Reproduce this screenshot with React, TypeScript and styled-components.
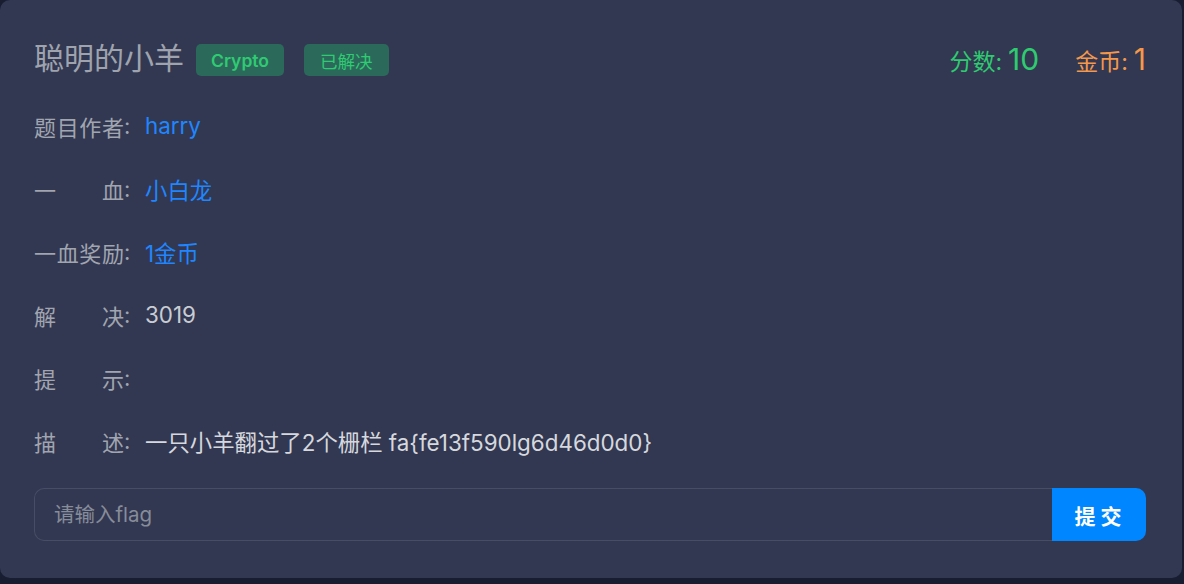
import React from "react";
import styled, { createGlobalStyle } from "styled-components";

const Global = createGlobalStyle`
  html, body { margin: 0; padding: 0; background: #181d31; }
  body { font-family: Inter, "Noto Sans CJK SC", sans-serif; }
`;

const Page = styled.div`
  width: 1184px;
  height: 584px;
  background: #181d31;
  overflow: hidden;
`;

const Card = styled.div`
  width: 1182px;
  height: 578px;
  box-sizing: border-box;
  background: #323852;
  border-radius: 10px;
  padding: 40px 36px 0 34px;
  display: flex;
  flex-direction: column;
`;

const Header = styled.div`
  height: 36px;
  display: flex;
  align-items: center;
`;

const Title = styled.h1`
  margin: 0 12px 0 0;
  font-size: 30px;
  font-weight: 400;
  color: #9fa3ad;
  line-height: 36px;
`;

const Badge = styled.span<{ $bold?: boolean }>`
  display: inline-flex;
  align-items: center;
  justify-content: center;
  height: 32px;
  padding: 0 ${(p) => (p.$bold ? 15 : 16)}px;
  margin-right: 20px;
  border-radius: 5px;
  background: #2b695b;
  color: #2fcb72;
  font-size: 17.5px;
  font-weight: ${(p) => (p.$bold ? 600 : 400)};
  margin-top: 4px;
`;

const Spacer = styled.div`
  flex: 1;
`;

const Stat = styled.div<{ $color: string }>`
  display: flex;
  align-items: baseline;
  color: ${(p) => p.$color};
  margin-left: 36px;
  margin-top: 2px;
`;

const StatLabel = styled.span`
  font-size: 23px;
  margin-right: 6px;
`;

const StatValue = styled.span`
  font-size: 30px;
`;

const InfoList = styled.div`
  margin-top: 18px;
  display: flex;
  flex-direction: column;
`;

const Row = styled.div`
  height: 63px;
  display: flex;
  align-items: center;
  font-size: 22px;
`;

const Label = styled.span`
  width: 90px;
  display: flex;
  justify-content: space-between;
  color: #a1a5af;
`;

const Colon = styled.span`
  color: #a1a5af;
  width: 21px;
`;

const Value = styled.span<{ $color: string }>`
  color: ${(p) => p.$color};
  font-size: 22.4px;
`;

const Form = styled.form`
  margin-top: 16px;
  display: flex;
  height: 53px;
`;

const Input = styled.input`
  flex: 1;
  box-sizing: border-box;
  height: 53px;
  border: 1px solid #474d64;
  border-right: none;
  border-radius: 10px 0 0 10px;
  background: #323852;
  padding: 0 19px;
  font-family: Inter, "Noto Sans CJK SC", sans-serif;
  font-size: 20.5px;
  color: #d0d3da;
  outline: none;
  &::placeholder { color: #878c99; }
`;

const Button = styled.button`
  width: 94px;
  height: 53px;
  border: none;
  border-radius: 0 10px 10px 0;
  background: #0086fe;
  color: #ffffff;
  font-family: "Noto Sans CJK SC", sans-serif;
  font-size: 21px;
  font-weight: 700;
  letter-spacing: 5px;
  padding-left: 9px;
`;

const rows: { label: string; value: string; color: string }[] = [
  { label: "题目作者", value: "harry", color: "#1f86ff" },
  { label: "一血", value: "小白龙", color: "#1f86ff" },
  { label: "一血奖励", value: "1金币", color: "#1f86ff" },
  { label: "解决", value: "3019", color: "#c9ccd3" },
  { label: "提示", value: "", color: "#c9ccd3" },
  { label: "描述", value: "一只小羊翻过了2个栅栏 fa{fe13f590lg6d46d0d0}", color: "#d6d8de" },
];

export default function App() {
  return (
    <Page>
      <Global />
      <Card>
        <Header>
          <Title>聪明的小羊</Title>
          <Badge $bold>Crypto</Badge>
          <Badge>已解决</Badge>
          <Spacer />
          <Stat $color="#2ecb70">
            <StatLabel>分数:</StatLabel>
            <StatValue>10</StatValue>
          </Stat>
          <Stat $color="#f5984a">
            <StatLabel>金币:</StatLabel>
            <StatValue>1</StatValue>
          </Stat>
        </Header>
        <InfoList>
          {rows.map((r) => (
            <Row key={r.label}>
              <Label>
                {Array.from(r.label).map((c, i) => (
                  <span key={i}>{c}</span>
                ))}
              </Label>
              <Colon>:</Colon>
              <Value $color={r.color}>{r.value}</Value>
            </Row>
          ))}
        </InfoList>
        <Form onSubmit={(e) => e.preventDefault()}>
          <Input placeholder="请输入flag" />
          <Button type="submit">提交</Button>
        </Form>
      </Card>
    </Page>
  );
}
